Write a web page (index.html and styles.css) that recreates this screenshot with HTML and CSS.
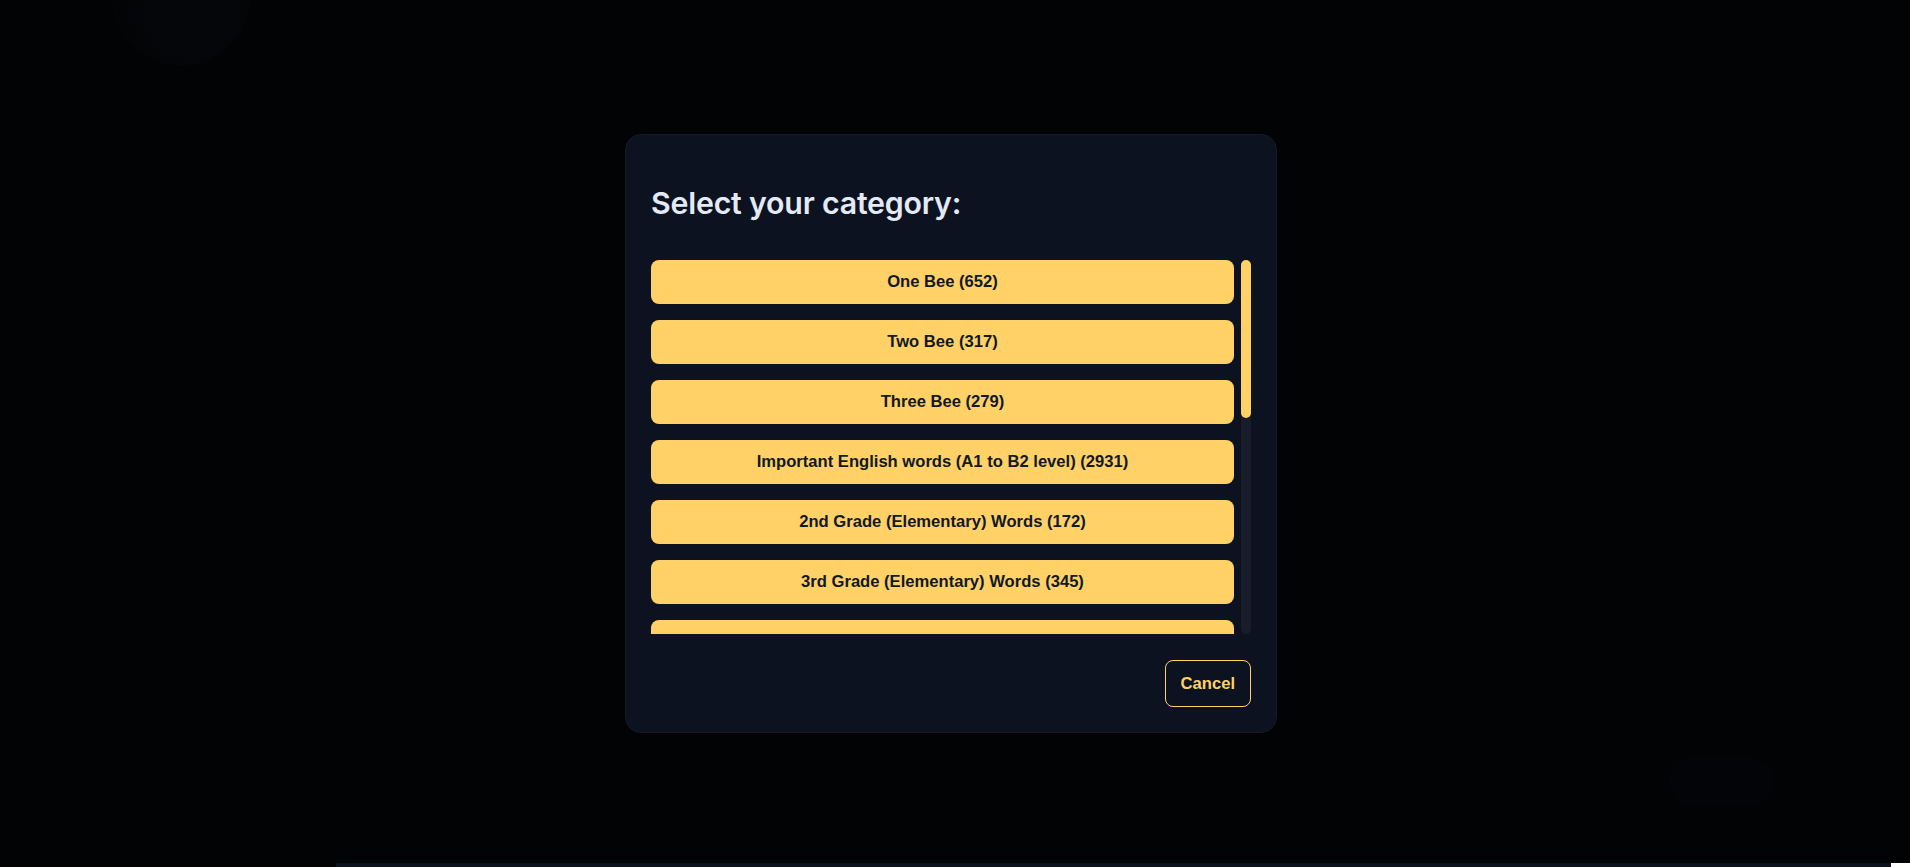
FILE: index.html
```html
<!DOCTYPE html>
<html lang="en">
<head>
<meta charset="utf-8">
<title>Select your category</title>
<link rel="stylesheet" href="styles.css">
</head>
<body>
<div class="page">
  <div class="page-main">
    <div class="ghost ghost-logo"></div>
    <div class="ghost ghost-btn"></div>
  </div>
  <div class="page-foot">
    <div class="foot-gap"></div>
    <div class="foot-bar"></div>
  </div>
</div>

<div class="overlay">
  <div class="modal">
    <h2 class="modal-title">Select your category:</h2>
    <div class="list-wrap">
      <div class="cat-list">
        <button class="cat-btn">One Bee (652)</button>
        <button class="cat-btn">Two Bee (317)</button>
        <button class="cat-btn">Three Bee (279)</button>
        <button class="cat-btn">Important English words (A1 to B2 level) (2931)</button>
        <button class="cat-btn">2nd Grade (Elementary) Words (172)</button>
        <button class="cat-btn">3rd Grade (Elementary) Words (345)</button>
        <button class="cat-btn"></button>
      </div>
      <div class="scrollbar"><div class="scroll-thumb"></div></div>
    </div>
    <div class="modal-actions">
      <button class="cancel-btn">Cancel</button>
    </div>
  </div>
</div>
</body>
</html>
```
FILE: styles.css
```css
html, body {
  margin: 0;
  padding: 0;
  background: #ffffff;
  overflow: hidden;
}

.page {
  width: 1910px;
  height: 867px;
  display: flex;
  flex-direction: column;
}

.page-main {
  flex: 1;
  background: #020305;
  position: relative;
}

.ghost {
  position: absolute;
  border-radius: 50%;
}

.ghost-logo {
  left: 113px;
  top: -72px;
  width: 135px;
  height: 135px;
  border: 1px solid #06070a;
  background: radial-gradient(circle at 58% 62%, #050609 0 30%, #030406 55%);
}

.ghost-btn {
  left: 1670px;
  top: 758px;
  width: 100px;
  height: 44px;
  border-radius: 22px;
  border: 1px solid #05060a;
  background: #030407;
}

.page-foot {
  height: 4px;
  display: flex;
}

.foot-gap {
  width: 336px;
  background: #020305;
}

.foot-bar {
  width: 1555px;
  background: #0d131e;
}

.overlay {
  position: fixed;
  inset: 0;
  display: flex;
  align-items: center;
  justify-content: center;
  padding-right: 8px;
}

.modal {
  width: 600px;
  padding: 25px;
  border: 1px solid #141a26;
  border-radius: 16px;
  background: #0c1220;
  display: flex;
  flex-direction: column;
}

.modal-title {
  margin: 26px 0 40px;
  font-family: Inter, "Noto Sans", sans-serif;
  font-weight: 600;
  font-size: 30.3px;
  line-height: 34px;
  color: #e3eaf5;
  letter-spacing: -0.2px;
}

.list-wrap {
  height: 374px;
  display: flex;
  gap: 7px;
}

.cat-list {
  flex: 1;
  overflow: hidden;
  display: flex;
  flex-direction: column;
  gap: 16px;
}

.scrollbar {
  width: 10px;
  border-radius: 5px;
  background: #181d29;
}

.scroll-thumb {
  height: 158px;
  border-radius: 5px;
  background: #ffd166;
}

.cat-btn {
  flex: none;
  height: 44px;
  border: none;
  border-radius: 8px;
  background: #ffd166;
  color: #111827;
  font-family: "Liberation Sans", Arial, sans-serif;
  font-weight: 700;
  font-size: 16.6px;
  padding: 0 12px;
  cursor: pointer;
}

.modal-actions {
  display: flex;
  justify-content: flex-end;
  margin-top: 26px;
}

.cancel-btn {
  height: 47px;
  padding: 0 15px;
  border: 1px solid #ffd166;
  border-radius: 8px;
  background: transparent;
  color: #ffd166;
  font-family: "Liberation Sans", Arial, sans-serif;
  font-weight: 700;
  font-size: 16.6px;
  cursor: pointer;
}
```
